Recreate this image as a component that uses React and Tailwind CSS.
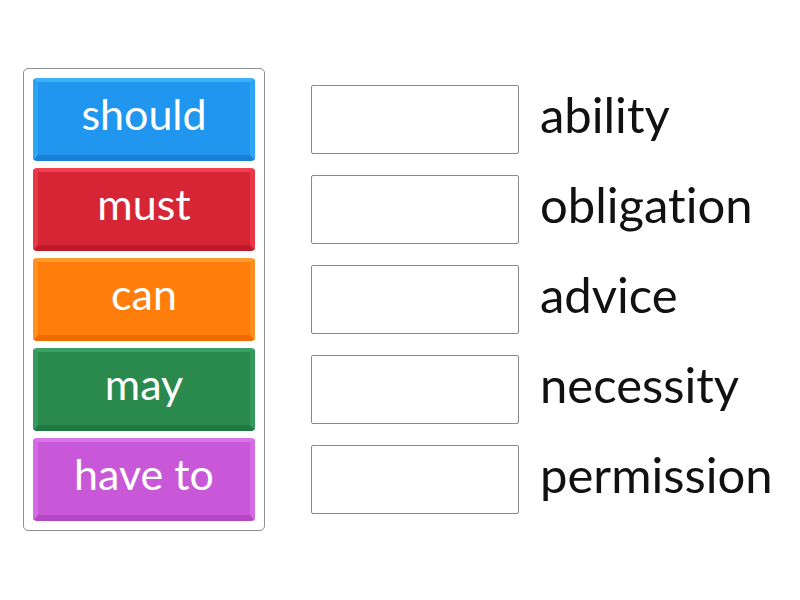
import React from "react";

const tiles = [
  { t: "should", main: "bg-[#2196ee]", b: "border-t-[#3db2f8] border-x-[#2ba5f5] border-b-[#1a80d6]" },
  { t: "must", main: "bg-[#d62636]", b: "border-t-[#f2404e] border-x-[#ea3747] border-b-[#c01a2a]" },
  { t: "can", main: "bg-[#ff7d0a]", b: "border-t-[#ff9b2c] border-x-[#ff8f1f] border-b-[#f06a00]" },
  { t: "may", main: "bg-[#2a8a4e]", b: "border-t-[#3aa066] border-x-[#35985d] border-b-[#1e7a40]" },
  { t: "have to", main: "bg-[#c858d8]", b: "border-t-[#da74ea] border-x-[#d46ae4] border-b-[#b447c4]" },
];

const words = ["ability", "obligation", "advice", "necessity", "permission"];

export default function App() {
  return (
    <div className="w-[800px] h-[600px] bg-white flex items-start [font-variant-ligatures:none]" style={{ fontFamily: "Lato, 'Open Sans', sans-serif" }}>
      <div className="ml-[23px] mt-[68px] w-[242px] border border-[#8f8f8f] rounded-[5px] p-[9px] flex flex-col gap-[7px]">
        {tiles.map((x) => (
          <div
            key={x.t}
            className={`h-[83px] rounded-[4px] border-x-[5px] border-t-[4px] border-b-[6px] ${x.main} ${x.b} flex items-center justify-center text-white text-[43px] leading-none pb-[10px]`}
          >
            {x.t}
          </div>
        ))}
      </div>
      <div className="ml-[46px] mt-[85px] flex flex-col gap-[21px]">
        {words.map((w) => (
          <div key={w} className="flex items-center h-[69px]">
            <div className="w-[208px] h-[69px] border border-[#888] rounded-[2px] bg-white" />
            <div className="ml-[21px] text-[49px] text-[#111] leading-none pb-[10px]">{w}</div>
          </div>
        ))}
      </div>
    </div>
  );
}
